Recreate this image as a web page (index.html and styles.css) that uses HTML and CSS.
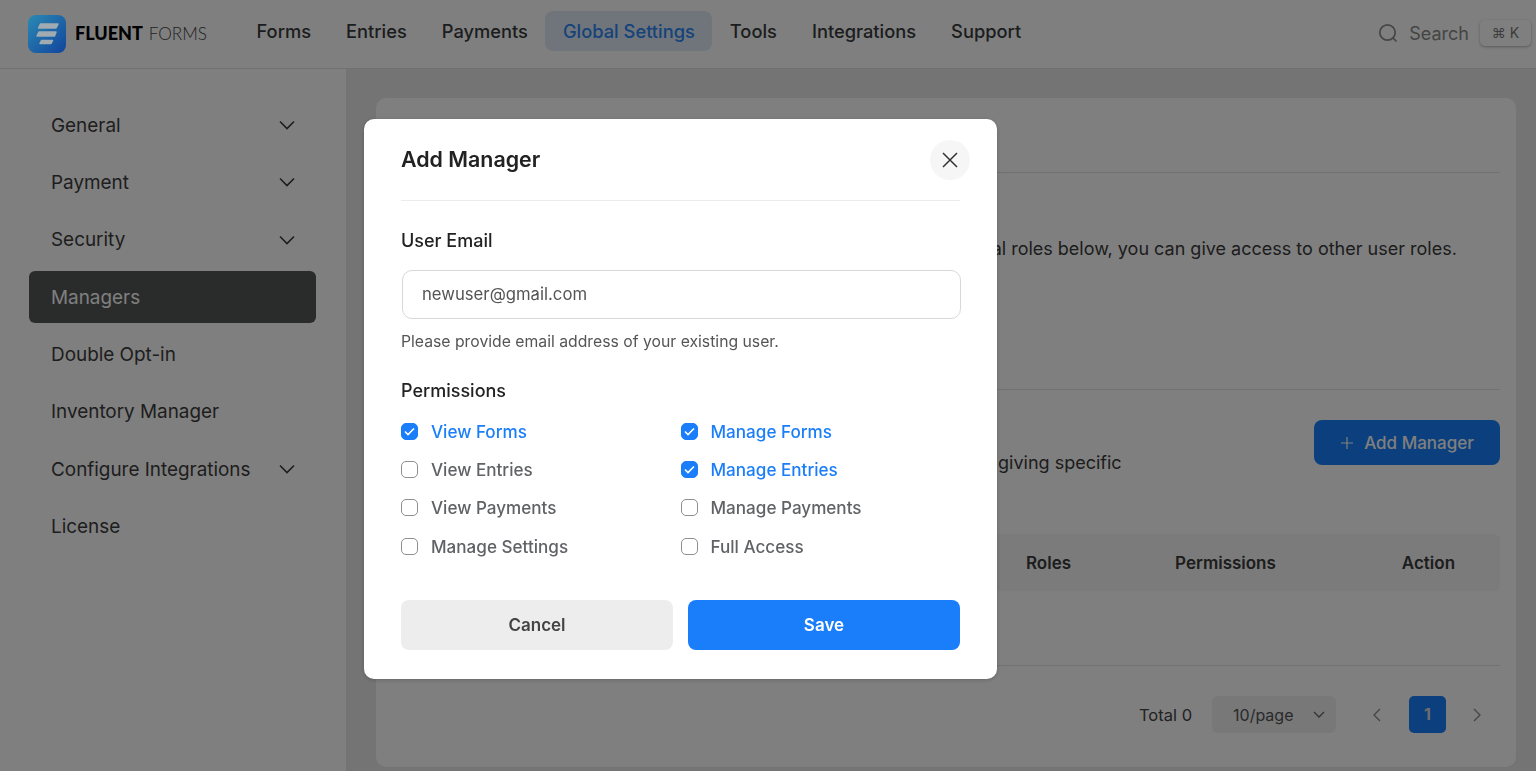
FILE: index.html
```html
<!DOCTYPE html>
<html>
<head>
    <title>Fluent Forms - Managers</title>
    <link rel="stylesheet" href="styles.css">
</head>
<body>
    <header class="topbar">
        <div class="logo">
            <svg class="logo-icon" width="38" height="38" viewBox="0 0 38 38">
                <defs>
                    <linearGradient id="logo-grad" x1="0" y1="0" x2="1" y2="1">
                        <stop offset="0" stop-color="#2a8ab4"/>
                        <stop offset="1" stop-color="#12449c"/>
                    </linearGradient>
                </defs>
                <rect width="38" height="38" rx="8" fill="url(#logo-grad)"/>
                <path d="M12.500 9H30L28 13H10.500Z" fill="#a0abb2" stroke="#a0abb2" stroke-width="1.500" stroke-linejoin="round"/>
                <path d="M11 17H28L26.500 21H9Z" fill="#a0abb2" stroke="#a0abb2" stroke-width="1.500" stroke-linejoin="round"/>
                <path d="M13.500 25.500H24.500L23 28.500H12Z" fill="#a0abb2" stroke="#a0abb2" stroke-width="1.500" stroke-linejoin="round"/>
            </svg>
            <span class="logo-text"><b>FLUENT</b><span class="logo-light">FORMS</span></span>
        </div>
        <nav class="nav">
            <a class="nav-item">Forms</a>
            <a class="nav-item">Entries</a>
            <a class="nav-item">Payments</a>
            <a class="nav-item active">Global Settings</a>
            <a class="nav-item">Tools</a>
            <a class="nav-item">Integrations</a>
            <a class="nav-item">Support</a>
        </nav>
        <div class="search">
            <svg width="20" height="20" viewBox="0 0 20 20" fill="none" stroke="#8c8c8c" stroke-width="1.700" stroke-linecap="round">
                <circle cx="9.500" cy="9.500" r="7.700"/>
                <path d="M15.200 15.200L18 18"/>
            </svg>
            <span class="search-label">Search</span>
            <span class="kbd">⌘ K</span>
        </div>
    </header>

    <div class="layout">
        <aside class="sidebar">
            <div class="side-item">General <svg class="chev" width="16" height="10" viewBox="0 0 16 10"><path d="M1 1.500L8 8.500L15 1.500"/></svg></div>
            <div class="side-item">Payment <svg class="chev" width="16" height="10" viewBox="0 0 16 10"><path d="M1 1.500L8 8.500L15 1.500"/></svg></div>
            <div class="side-item">Security <svg class="chev" width="16" height="10" viewBox="0 0 16 10"><path d="M1 1.500L8 8.500L15 1.500"/></svg></div>
            <div class="side-item active">Managers</div>
            <div class="side-item">Double Opt-in</div>
            <div class="side-item">Inventory Manager</div>
            <div class="side-item">Configure Integrations <svg class="chev" width="16" height="10" viewBox="0 0 16 10"><path d="M1 1.500L8 8.500L15 1.500"/></svg></div>
            <div class="side-item">License</div>
        </aside>

        <main class="content">
            <div class="card">
                <div class="card-head">Managers</div>
                <div class="roles">
                    <div class="section-title">Administrator Roles</div>
                    <p class="section-text">Administrators have full access to Fluent Forms. By selecting additional roles below, you can give access to other user roles.</p>
                </div>
                <div class="managers">
                    <div class="managers-info">
                        <div class="section-title">Managers</div>
                        <p class="section-text">Add users who are not administrators and give them admin access by giving specific<br>permissions.</p>
                    </div>
                    <button class="add-btn">
                        <svg width="14" height="14" viewBox="0 0 14 14" stroke="#fff" stroke-width="1.200"><path d="M7 1V13M1 7H13"/></svg>
                        Add Manager
                    </button>
                </div>
                <div class="table-head">
                    <span class="col-roles">Roles</span>
                    <span class="col-perms">Permissions</span>
                    <span class="col-action">Action</span>
                </div>
                <div class="table-body"></div>
                <div class="pagination">
                    <span class="total">Total 0</span>
                    <span class="page-size">10/page <svg class="chev-sm" width="12" height="7" viewBox="0 0 12 7"><path d="M1 1L6 6L11 1"/></svg></span>
                    <svg class="pager-arrow" width="8" height="14" viewBox="0 0 8 14"><path d="M7 1L1 7L7 13"/></svg>
                    <span class="page-num">1</span>
                    <svg class="pager-arrow" width="8" height="14" viewBox="0 0 8 14"><path d="M1 1L7 7L1 13"/></svg>
                </div>
            </div>
        </main>
    </div>

    <div class="overlay"></div>

    <div class="modal">
        <div class="modal-head">
            <h2>Add Manager</h2>
            <span class="close">
                <svg width="16" height="16" viewBox="0 0 16 16" fill="none" stroke="#333" stroke-width="1.500"><path d="M1 1L15 15M15 1L1 15"/></svg>
            </span>
        </div>
        <label class="field-label">User Email</label>
        <div class="email-input">newuser@gmail.com</div>
        <div class="help">Please provide email address of your existing user.</div>
        <label class="field-label perm-label">Permissions</label>
        <div class="perm-grid">
            <div class="perm on"><span class="box"><svg width="11" height="9" viewBox="0 0 11 9" fill="none" stroke="#fff" stroke-width="1.600"><path d="M1 4.500L4 7.500L10 1.500"/></svg></span>View Forms</div>
            <div class="perm on"><span class="box"><svg width="11" height="9" viewBox="0 0 11 9" fill="none" stroke="#fff" stroke-width="1.600"><path d="M1 4.500L4 7.500L10 1.500"/></svg></span>Manage Forms</div>
            <div class="perm"><span class="box"></span>View Entries</div>
            <div class="perm on"><span class="box"><svg width="11" height="9" viewBox="0 0 11 9" fill="none" stroke="#fff" stroke-width="1.600"><path d="M1 4.500L4 7.500L10 1.500"/></svg></span>Manage Entries</div>
            <div class="perm"><span class="box"></span>View Payments</div>
            <div class="perm"><span class="box"></span>Manage Payments</div>
            <div class="perm"><span class="box"></span>Manage Settings</div>
            <div class="perm"><span class="box"></span>Full Access</div>
        </div>
        <div class="modal-actions">
            <button class="btn-cancel">Cancel</button>
            <button class="btn-save">Save</button>
        </div>
    </div>
</body>
</html>
```

FILE: styles.css
```css
* { box-sizing: border-box; }
html, body { height: 100%; }
body { margin: 0; height: 771px; overflow: hidden; font-family: Inter, "Liberation Sans", sans-serif; background: #fff; color: #3a3a3a; }
button { font-family: inherit; border: 0; }

.topbar { height: 69px; display: flex; align-items: center; padding: 0 5px 6px 28px; background: #fff; border-bottom: 1px solid #e2e2e2; }
.logo { display: flex; align-items: center; gap: 9px; width: 211px; flex: none; }
.logo-icon { flex: none; margin-top: 5px; position: relative; z-index: 2; }
.logo-text { margin-top: 3px; font-family: Lato, sans-serif; font-size: 18px; color: #000; white-space: nowrap; }
.logo-text b { font-weight: 900; }
.logo-light { margin-left: 6px; font-size: 17.200px; font-weight: 300; color: #444; letter-spacing: -0.100px; }
.nav { display: flex; flex: 1; }
.nav-item { padding: 0 17.500px; height: 40px; line-height: 40px; font-size: 18.300px; font-weight: 500; color: #383a3c; border-radius: 8px; white-space: nowrap; }
.nav-item.active { background: #e0ebf7; color: #2a86f5; }
.search { display: flex; align-items: center; flex: none; margin-top: 4px; }
.search-label { margin-left: 11px; font-size: 18px; color: #8a8a8a; }
.kbd { margin-left: 11px; width: 51px; height: 26px; line-height: 26px; text-align: center; font-size: 14px; color: #7a7a7a; background: #fff; border-radius: 5px; box-shadow: 0 1px 3px rgba(0,0,0,.3); }

.layout { display: flex; height: 702px; }
.sidebar { width: 346px; flex: none; padding: 30px 30px 0 29px; background: #fff; }
.side-item { height: 52px; margin-bottom: 5.400px; padding: 0 21px 0 22px; display: flex; align-items: center; justify-content: space-between; font-size: 18.900px; color: #3c3c3c; border-radius: 6px; }
.side-item.active { background: #545656; color: #fff; }
.chev { fill: none; stroke: #3c3c3c; stroke-width: 1.600; }

.content { flex: 1; padding: 29px 20px 4px 30px; background: #e8e8e8; }
.card { height: 669px; padding: 0 16px 0 25px; background: #fff; border-radius: 10px; }
.card-head { height: 75px; padding-top: 28px; font-size: 22px; font-weight: 600; border-bottom: 1px solid #e2e2e2; }
.roles { height: 217px; padding-top: 24px; border-bottom: 1px solid #e2e2e2; }
.section-title { font-size: 20px; font-weight: 600; }
.section-text { margin: 14px 0 0; font-size: 18px; line-height: 27px; white-space: nowrap; }
.managers { height: 144px; display: flex; justify-content: space-between; padding-top: 30px; }
.managers .section-text { margin-top: 5px; }
.add-btn { width: 186px; height: 45px; display: flex; align-items: center; justify-content: center; gap: 10px; border-radius: 8px; background: #167efb; color: #fff; font-size: 17px; font-weight: 500; }
.table-head { height: 57px; display: flex; align-items: center; background: #f6f6f6; border-radius: 6px; font-size: 17px; font-weight: 600; }
.col-roles { margin-left: 625px; }
.col-perms { margin-left: 104px; }
.col-action { margin-left: 126px; }
.table-body { height: 75px; border-bottom: 1px solid #e2e2e2; }
.pagination { display: flex; align-items: center; height: 37px; margin-top: 30px; }
.total { margin-left: 738px; font-size: 16.500px; color: #444; white-space: nowrap; flex: none; }
.page-size { width: 124px; height: 37px; margin-left: 20px; padding: 0 11px 0 21px; flex: none; display: flex; align-items: center; justify-content: space-between; background: #f0f0f0; border-radius: 6px; font-size: 16px; color: #555; }
.chev-sm { fill: none; stroke: #666; stroke-width: 1.300; }
.pager-arrow { margin: 0 28px 0 37px; flex: none; fill: none; stroke: #888; stroke-width: 1.300; }
.pager-arrow:last-child { margin: 0 0 0 27px; }
.page-num { width: 37px; height: 37px; line-height: 37px; flex: none; text-align: center; background: #167efb; color: #ddd; border-radius: 5px; font-size: 16px; font-weight: 700; }

.overlay { position: fixed; inset: 0; background: rgba(0,0,0,.5); }
.modal { position: fixed; left: 364px; top: 119px; width: 633px; height: 560px; padding: 21px 37px 0; background: #fff; border-radius: 10px; box-shadow: 0 1px 4px rgba(0,0,0,.2); }
.modal-head { height: 61px; display: flex; align-items: flex-start; justify-content: space-between; border-bottom: 1px solid #ececec; }
.modal-head h2 { margin: 0; font-size: 21.400px; font-weight: 600; line-height: 39px; color: #222; }
.close { width: 40px; height: 40px; margin: 0 -10px 0 0; display: flex; align-items: center; justify-content: center; border-radius: 50%; background: #f6f6f6; }
.field-label { display: block; margin-top: 29px; font-size: 18px; font-weight: 500; line-height: 22px; color: #222; }
.email-input { height: 49px; width: 559px; margin: 18px 0 0 1px; padding-left: 19px; line-height: 47px; border: 1px solid #d8d8d8; border-radius: 10px; font-size: 16.700px; color: #555; }
.help { margin-top: 13px; font-size: 15.760px; line-height: 19px; color: #555; }
.perm-label { margin-top: 29px; }
.perm-grid { margin-top: 10px; display: grid; grid-template-columns: 279.500px 1fr; grid-auto-rows: 38.400px; }
.perm { display: flex; align-items: center; font-size: 17.100px; font-weight: 500; color: #606266; }
.perm.on { color: #1a7efb; }
.box { width: 17px; height: 17px; margin-right: 13px; display: flex; align-items: center; justify-content: center; border: 1px solid #8f8f8f; border-radius: 5px; background: #fff; }
.on .box { background: #1a7efb; border-color: #1a7efb; }
.modal-actions { margin-top: 34px; display: flex; gap: 15px; }
.modal-actions button { width: 272px; height: 50px; border-radius: 8px; font-size: 17px; font-weight: 600; }
.btn-cancel { background: #ededed; color: #444; }
.btn-save { background: #1a7efb; color: #fff; }
```
